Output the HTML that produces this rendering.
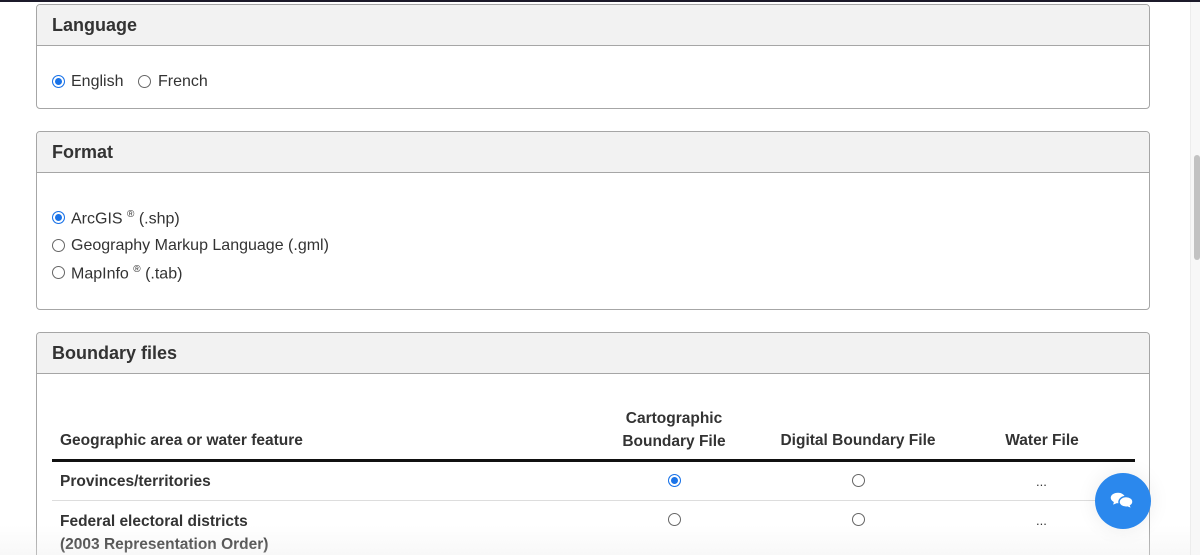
<!DOCTYPE html>
<html style="width:1200px;height:555px;overflow:hidden"><head><style>
body{margin:0;width:1200px;height:555px;overflow:hidden;background:#fff;font-family:"Liberation Sans",sans-serif;color:#333;position:relative}
.a{position:absolute}
.panel{position:absolute;left:36px;width:1112px;border:1px solid #a6a6a6;border-radius:4px;background:#fff;overflow:hidden}
.hd{height:40px;background:#f2f2f2;border-bottom:1px solid #a6a6a6;font-size:18px;font-weight:bold;line-height:41px;padding-left:15px;color:#333}
.r{position:absolute;width:11px;height:11px;border:1px solid #666;border-radius:50%;background:#fff}
.r.on{border:1px solid #1a73e8;background:#1a73e8;box-shadow:inset 0 0 0 2px #fff}
.t{position:absolute;font-size:16px;white-space:nowrap;color:#333}
.b{font-weight:bold;font-size:15.5px;color:#333}
sup{font-size:10px}
</style></head><body>
<div class="a" style="left:0;top:0;width:1200px;height:2px;background:#1c1a2a"></div>
<div class="a" style="left:1190px;top:2px;width:10px;height:553px;background:#f7f7f7;border-left:1px solid #ececec"></div>
<div class="a" style="left:1194px;top:155px;width:6px;height:105px;background:#c2c2c2;border-radius:3px"></div>

<div class="panel" style="top:4px;height:103px"><div class="hd">Language</div></div>
<div class="r on" style="left:52px;top:75px"></div><div class="t" style="left:71px;top:73px">English</div>
<div class="r" style="left:138px;top:75px"></div><div class="t" style="left:158px;top:73px">French</div>

<div class="panel" style="top:131px;height:177px"><div class="hd">Format</div></div>
<div class="r on" style="left:52px;top:211px"></div><div class="t" style="left:71px;top:209px">ArcGIS <sup>®</sup> (.shp)</div>
<div class="r" style="left:52px;top:239px"></div><div class="t" style="left:71px;top:237px">Geography Markup Language (.gml)</div>
<div class="r" style="left:52px;top:266px"></div><div class="t" style="left:71px;top:264px">MapInfo <sup>®</sup> (.tab)</div>

<div class="panel" style="top:332px;height:230px;border-bottom:none;border-radius:4px 4px 0 0"><div class="hd">Boundary files</div></div>
<div class="t b" style="left:60px;top:432px">Geographic area or water feature</div>
<div class="t b" style="left:600px;width:148px;text-align:center;top:407px;line-height:23px">Cartographic<br>Boundary File</div>
<div class="t b" style="left:758px;width:200px;text-align:center;top:432px">Digital Boundary File</div>
<div class="t b" style="left:962px;width:160px;text-align:center;top:432px">Water File</div>
<div class="a" style="left:52px;top:459px;width:1083px;height:3px;background:#111"></div>
<div class="t b" style="left:60px;top:473px">Provinces/territories</div>
<div class="r on" style="left:668px;top:474px"></div>
<div class="r" style="left:852px;top:474px"></div>
<div class="t" style="left:1036px;top:474px;font-size:13px">...</div>
<div class="a" style="left:52px;top:500px;width:1083px;height:1px;background:#ddd"></div>
<div class="t b" style="left:60px;top:510px;line-height:23px">Federal electoral districts<br>(2003 Representation Order)</div>
<div class="r" style="left:668px;top:513px"></div>
<div class="r" style="left:852px;top:513px"></div>
<div class="t" style="left:1036px;top:513px;font-size:13px">...</div>

<div class="a" style="left:0;top:525px;width:1190px;height:30px;background:linear-gradient(rgba(240,240,240,0),rgba(235,235,235,0.35))"></div>
<div class="a" style="left:1095px;top:473px;width:56px;height:56px;border-radius:50%;background:#2b88ed;box-shadow:0 0 20px rgba(0,0,0,0.08)">
<svg width="56" height="56" viewBox="0 0 56 56"><path d="M23 19c-4.5 0-8 2.6-8 5.8 0 1.9 1.2 3.5 3 4.6L17 33l5-2.1c.3 0 .7.1 1 .1 4.5 0 8-2.6 8-5.8S27.5 19 23 19z" fill="#fff" stroke="#2b88ed" stroke-width="1.5"/><path d="M31 23.5c4 0 7 2.3 7 5.2 0 1.600-.9 3-2.4 4L37 36l-4.6-1.900c-.5.1-.9.1-1.4.1-4 0-7-2.3-7-5.2s3-5.5 7-5.5z" fill="#fff" stroke="#2b88ed" stroke-width="1.5"/></svg></div>
</body></html>
